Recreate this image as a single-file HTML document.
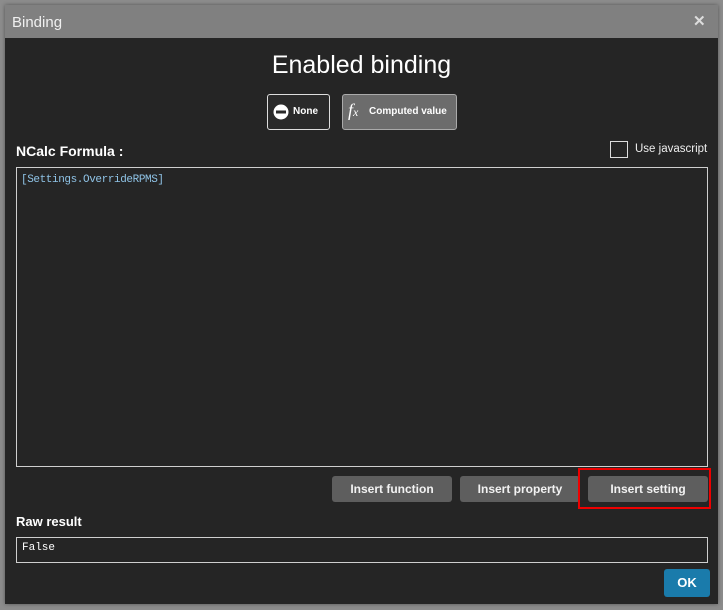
<!DOCTYPE html><html><head><style>
body{margin:0;width:723px;height:610px;background:#8c8c8c;font-family:"Liberation Sans",sans-serif;position:relative;overflow:hidden}
.a{position:absolute}
.win{left:5px;top:5px;width:713px;height:599px;background:#252525;box-shadow:0 0 4px rgba(0,0,0,.4)}
.tb{left:5px;top:5px;width:713px;height:33px;background:#808080;color:#f0f0f0;font-size:15px}
.btn{background:#5e5e5e;color:#f2f2f2;font-size:12px;font-weight:bold;border-radius:3px;text-align:center;line-height:26px;top:476px;height:26px;width:120px}
.box{border:1px solid #cfcfcf;box-sizing:border-box}
</style></head><body>
<div class="a win"></div>
<div class="a tb"><span class="a" style="left:7px;top:9px">Binding</span><span class="a" style="left:688px;top:7px;font-size:15px;font-weight:bold;color:#ddd">✕</span></div>
<div class="a" style="left:0;width:723px;top:51px;text-align:center;color:#fff;font-size:25px">Enabled binding</div>
<div class="a box" style="left:267px;top:94px;width:63px;height:36px;border-radius:3px;background:#2a2a2a;border-color:#ddd"></div>
<svg class="a" style="left:273px;top:104px" width="16" height="16"><circle cx="8" cy="8" r="7.5" fill="#fff"/><rect x="3" y="6.5" width="10" height="3" fill="#2a2a2a"/></svg>
<div class="a" style="left:293px;top:106px;color:#fff;font-size:10px;font-weight:bold">None</div>
<div class="a box" style="left:342px;top:94px;width:115px;height:36px;border-radius:3px;background:#6c6c6c;border-color:#aaa"></div>
<div class="a" style="left:348px;top:100px;color:#fff;font-size:18px;font-style:italic;font-family:'Liberation Serif',serif">f<span style="font-size:12px">x</span></div>
<div class="a" style="left:369px;top:106px;color:#fff;font-size:10px;font-weight:bold">Computed value</div>
<div class="a" style="left:16px;top:143px;color:#fff;font-size:14px;font-weight:bold">NCalc Formula :</div>
<div class="a box" style="left:610px;top:141px;width:18px;height:17px;border-color:#ddd"></div>
<div class="a" style="left:635px;top:143px;color:#eee;font-size:11.5px">Use javascript</div>
<div class="a box" style="left:16px;top:167px;width:692px;height:300px"></div>
<div class="a" style="left:21px;top:174px;color:#8fc3e6;font-size:11px;letter-spacing:-0.4px;font-family:'Liberation Mono',monospace">[Settings.OverrideRPMS]</div>
<div class="a btn" style="left:332px">Insert function</div>
<div class="a btn" style="left:460px">Insert property</div>
<div class="a btn" style="left:588px">Insert setting</div>
<div class="a" style="left:578px;top:468px;width:129px;height:37px;border:2px solid #e00"></div>
<div class="a" style="left:16px;top:514px;color:#fff;font-size:13px;font-weight:bold">Raw result</div>
<div class="a box" style="left:16px;top:537px;width:692px;height:26px"></div>
<div class="a" style="left:22px;top:542px;color:#fff;font-size:11px;font-family:'Liberation Mono',monospace">False</div>
<div class="a" style="left:664px;top:569px;width:46px;height:28px;background:#1a7bab;border-radius:3px;color:#fff;font-weight:bold;font-size:13px;text-align:center;line-height:28px">OK</div>
</body></html>
